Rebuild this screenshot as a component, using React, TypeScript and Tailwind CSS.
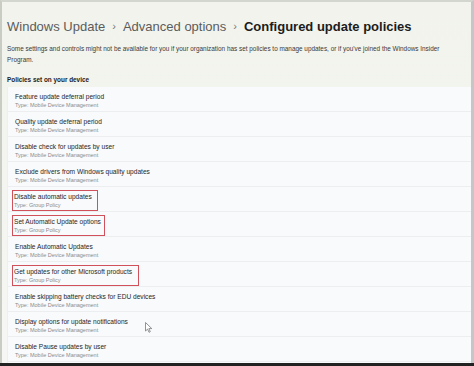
const policies = [
  { name: "Feature update deferral period", type: "Mobile Device Management" },
  { name: "Quality update deferral period", type: "Mobile Device Management" },
  { name: "Disable check for updates by user", type: "Mobile Device Management" },
  { name: "Exclude drivers from Windows quality updates", type: "Mobile Device Management" },
  { name: "Disable automatic updates", type: "Group Policy", box: "w-[86px]" },
  { name: "Set Automatic Update options", type: "Group Policy", box: "w-[93px]" },
  { name: "Enable Automatic Updates", type: "Mobile Device Management" },
  { name: "Get updates for other Microsoft products", type: "Group Policy", box: "w-[127px]" },
  { name: "Enable skipping battery checks for EDU devices", type: "Mobile Device Management" },
  { name: "Display options for update notifications", type: "Mobile Device Management", cursor: true },
  { name: "Disable Pause updates by user", type: "Mobile Device Management" },
];

function Cursor() {
  return (
    <svg className="absolute left-[137px] top-[10px]" width="8" height="11" viewBox="0 0 8 11">
      <path d="M0.5 0.5 L0.5 9 L2.6 7.1 L4 10.3 L5.3 9.7 L3.9 6.6 L6.8 6.6 Z" fill="#fff" stroke="#777" strokeWidth="0.8" />
    </svg>
  );
}

export default function App() {
  return (
    <div className="w-[474px] h-[366px] overflow-hidden bg-[#222]">
      <div
        className="flex flex-col h-[363px] border-l-2 border-t-2 border-r-[3px] border-l-[#c8ccc2] border-t-[#d3d6cf] border-r-[#c6c6c6] bg-gradient-to-b from-[#f1f3ec] to-[#f6f7f4]"
        style={{ fontFamily: '"Liberation Sans", Arial, sans-serif' }}
      >
        <div className="flex items-center gap-[7px] pl-[5px] pt-[13px] h-[36px] text-[13px] leading-none whitespace-nowrap">
          <span className="text-[#5c5c5c]">Windows Update</span>
          <span className="text-[#777] text-[11px]">›</span>
          <span className="text-[#5c5c5c]">Advanced options</span>
          <span className="text-[#777] text-[11px]">›</span>
          <span className="text-[#1c1c1c] font-bold">Configured update policies</span>
        </div>
        <p className="pl-[5px] pr-[16px] mt-[5px] text-[6.4px] leading-[11px] text-[#3a3a3a]">
          Some settings and controls might not be available for you if your organization has set policies to manage updates, or if you've joined the Windows Insider Program.
        </p>
        <p className="pl-[5px] mt-[10px] text-[6.4px] leading-[10px] font-bold text-[#222]">
          Policies set on your device
        </p>
        <div className="mt-[2px] ml-[5px] flex-1 bg-[#f9fafb] border-l border-[#eef0f0]">
          {policies.map((p) => (
            <div key={p.name} className="relative flex items-start h-[25px] border-b border-[#eceef0] pl-[6px] pt-[4px]">
              <div className={`flex flex-col whitespace-nowrap ${p.box ? `${p.box} py-[1px] px-[1px] border-[1.5px] border-[#d0505c] -ml-[2px] -mt-[1px]` : "py-[1px] px-[1px]"}`}>
                <span className="text-[6.6px] leading-[9px] text-[#262626]">{p.name}</span>
                <span className="text-[5.5px] leading-[8px] text-[#8a8a8a]">Type: {p.type}</span>
              </div>
              {p.cursor && <Cursor />}
            </div>
          ))}
        </div>
      </div>
    </div>
  );
}
